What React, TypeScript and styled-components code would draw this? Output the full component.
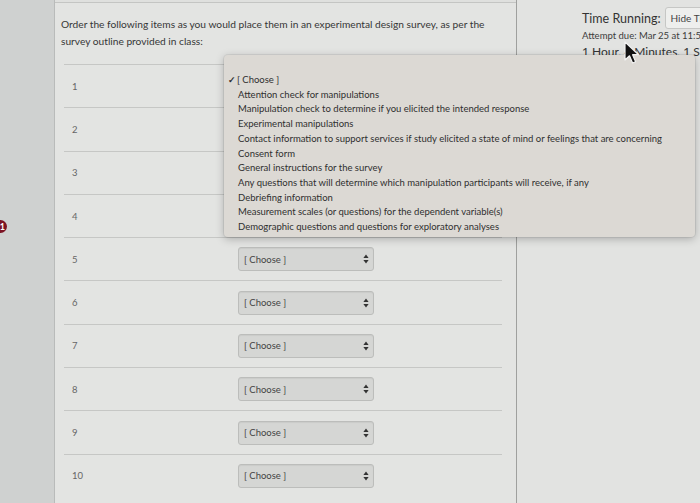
import React from 'react'
import styled, { createGlobalStyle } from 'styled-components'

const GlobalStyle = createGlobalStyle`
  html, body {
    margin: 0;
    padding: 0;
    background: #dfe0de;
    font-family: Lato, "Open Sans", "Liberation Sans", sans-serif;
  }
`

const OPTIONS = [
  'Attention check for manipulations',
  'Manipulation check to determine if you elicited the intended response',
  'Experimental manipulations',
  'Contact information to support services if study elicited a state of mind or feelings that are concerning',
  'Consent form',
  'General instructions for the survey',
  'Any questions that will determine which manipulation participants will receive, if any',
  'Debriefing information',
  'Measurement scales (or questions) for the dependent variable(s)',
  'Demographic questions and questions for exploratory analyses'
]

// rows 1-4 sit under the open dropdown
const COVERED_ROWS = 4

const App: React.FC = () => {
  const rows = Array.from({ length: 10 }, (_, i) => i + 1)
  return (
    <>
      <GlobalStyle />
      <Page>
        <SideStrip>
          <Badge>1</Badge>
        </SideStrip>
        <Main>
          <Question>
            Order the following items as you would place them in an experimental design survey, as per the
            <br />
            survey outline provided in class:
          </Question>
          <RowList>
            {rows.map(n => (
              <Row key={n}>
                <RowNumber>{n}</RowNumber>
                <ChooseBox $covered={n <= COVERED_ROWS}>
                  <span>[ Choose ]</span>
                  <Arrows />
                </ChooseBox>
              </Row>
            ))}
          </RowList>
        </Main>
        <Sidebar>
          <TimerHead>
            <TimerLabel>Time Running:</TimerLabel>
            <HideButton>Hide Time</HideButton>
          </TimerHead>
          <DueText>Attempt due: Mar 25 at 11:59pm</DueText>
          <Clock>1 Hour, 4 Minutes, 1 Second</Clock>
        </Sidebar>

        <Menu>
          <MenuItem $checked>
            <Check>✓</Check>[ Choose ]
          </MenuItem>
          {OPTIONS.map(o => (
            <MenuItem key={o}>{o}</MenuItem>
          ))}
        </Menu>
        <Cursor />
      </Page>
    </>
  )
}

const Arrows: React.FC = () => (
  <svg width='6' height='10' viewBox='0 0 6 10'>
    <path d='M3 0.5 L5.6 4 L0.4 4 Z' fill='#333' />
    <path d='M3 9.5 L5.6 6 L0.4 6 Z' fill='#333' />
  </svg>
)

const Cursor: React.FC = () => (
  <CursorWrap>
    <svg width='17' height='24' viewBox='0 0 17 24'>
      <path
        d='M1 1 L1 19 L5.5 14.8 L8.6 22 L11.6 20.7 L8.6 13.7 L14.6 13.7 Z'
        fill='#111'
        stroke='#f2f2f2'
        strokeWidth='1.2'
        strokeLinejoin='round'
      />
    </svg>
  </CursorWrap>
)

const Page = styled.div`
  position: relative;
  width: 700px;
  height: 503px;
  overflow: hidden;
  display: grid;
  grid-template-columns: 55px 461px 1fr;
`

const SideStrip = styled.div`
  position: relative;
  background: #cfd1d0;
  border-right: 1px solid #b9bbba;
`

const Badge = styled.div`
  position: absolute;
  left: -6px;
  top: 220px;
  width: 13px;
  height: 13px;
  border-radius: 50%;
  background: #7c1424;
  color: #fff;
  font-size: 9px;
  font-weight: 700;
  display: flex;
  align-items: center;
  justify-content: flex-end;
  padding-right: 2px;
  box-sizing: border-box;
`

const Main = styled.div`
  background: #e3e4e2;
  margin-top: 2px;
  border-top: 1px solid #c4c5c3;
  display: flex;
  flex-direction: column;
`

const Question = styled.div`
  padding: 13px 0 0 6px;
  font-size: 10.2px;
  line-height: 17px;
  color: #363636;
  white-space: nowrap;
  height: 48px;
`

const RowList = styled.div`
  margin: 0 14px 0 9px;
`

const Row = styled.div`
  display: flex;
  align-items: center;
  height: 43.3px;
  border-top: 1px solid #c6c7c5;
  box-sizing: border-box;
`

const RowNumber = styled.div`
  width: 166px;
  padding-left: 8px;
  font-size: 9.5px;
  color: #666;
`

const ChooseBox = styled.div<{ $covered?: boolean }>`
  visibility: ${p => (p.$covered ? 'hidden' : 'visible')};
  width: 136px;
  height: 24px;
  box-sizing: border-box;
  display: flex;
  align-items: center;
  justify-content: space-between;
  padding: 0 4px 0 5px;
  background: #d5d6d4;
  border: 1px solid #bcbdbb;
  border-radius: 3px;
  box-shadow: inset 0 1px 1px rgba(0, 0, 0, 0.05);
  font-size: 9.5px;
  color: #444;
`

const Sidebar = styled.div`
  background: #e2e3e1;
  border-left: 1px solid #9fa09e;
  padding: 7px 0 0 65px;
  overflow: hidden;
  white-space: nowrap;
`

const TimerHead = styled.div`
  display: flex;
  align-items: center;
  gap: 4px;
`

const TimerLabel = styled.div`
  font-size: 12.5px;
  color: #333;
`

const HideButton = styled.div`
  font-size: 10px;
  color: #444;
  background: #eeefed;
  border: 1px solid #c6c7c5;
  border-radius: 3px;
  padding: 4px 5px;
`

const DueText = styled.div`
  margin-top: 1px;
  font-size: 9.5px;
  color: #3c3c3c;
`

const Clock = styled.div`
  margin-top: 3px;
  font-size: 12px;
  color: #333;
`

const Menu = styled.div`
  position: absolute;
  left: 224px;
  top: 55px;
  width: 471px;
  height: 182px;
  box-sizing: border-box;
  padding: 18px 0 0 4px;
  background: #dcd9d4;
  border-radius: 4px;
  box-shadow: 0 2px 8px rgba(0, 0, 0, 0.25), 0 0 0 1px rgba(0, 0, 0, 0.06);
  z-index: 2;
`

const MenuItem = styled.div<{ $checked?: boolean }>`
  font-size: 9.5px;
  line-height: 14.7px;
  color: #2f2f2f;
  white-space: nowrap;
  padding-left: ${p => (p.$checked ? '0' : '10px')};
`

const Check = styled.span`
  display: inline-block;
  width: 9px;
  font-size: 9px;
  font-weight: 700;
`

const CursorWrap = styled.div`
  position: absolute;
  left: 624px;
  top: 41px;
  z-index: 3;
  line-height: 0;
`

export default App
